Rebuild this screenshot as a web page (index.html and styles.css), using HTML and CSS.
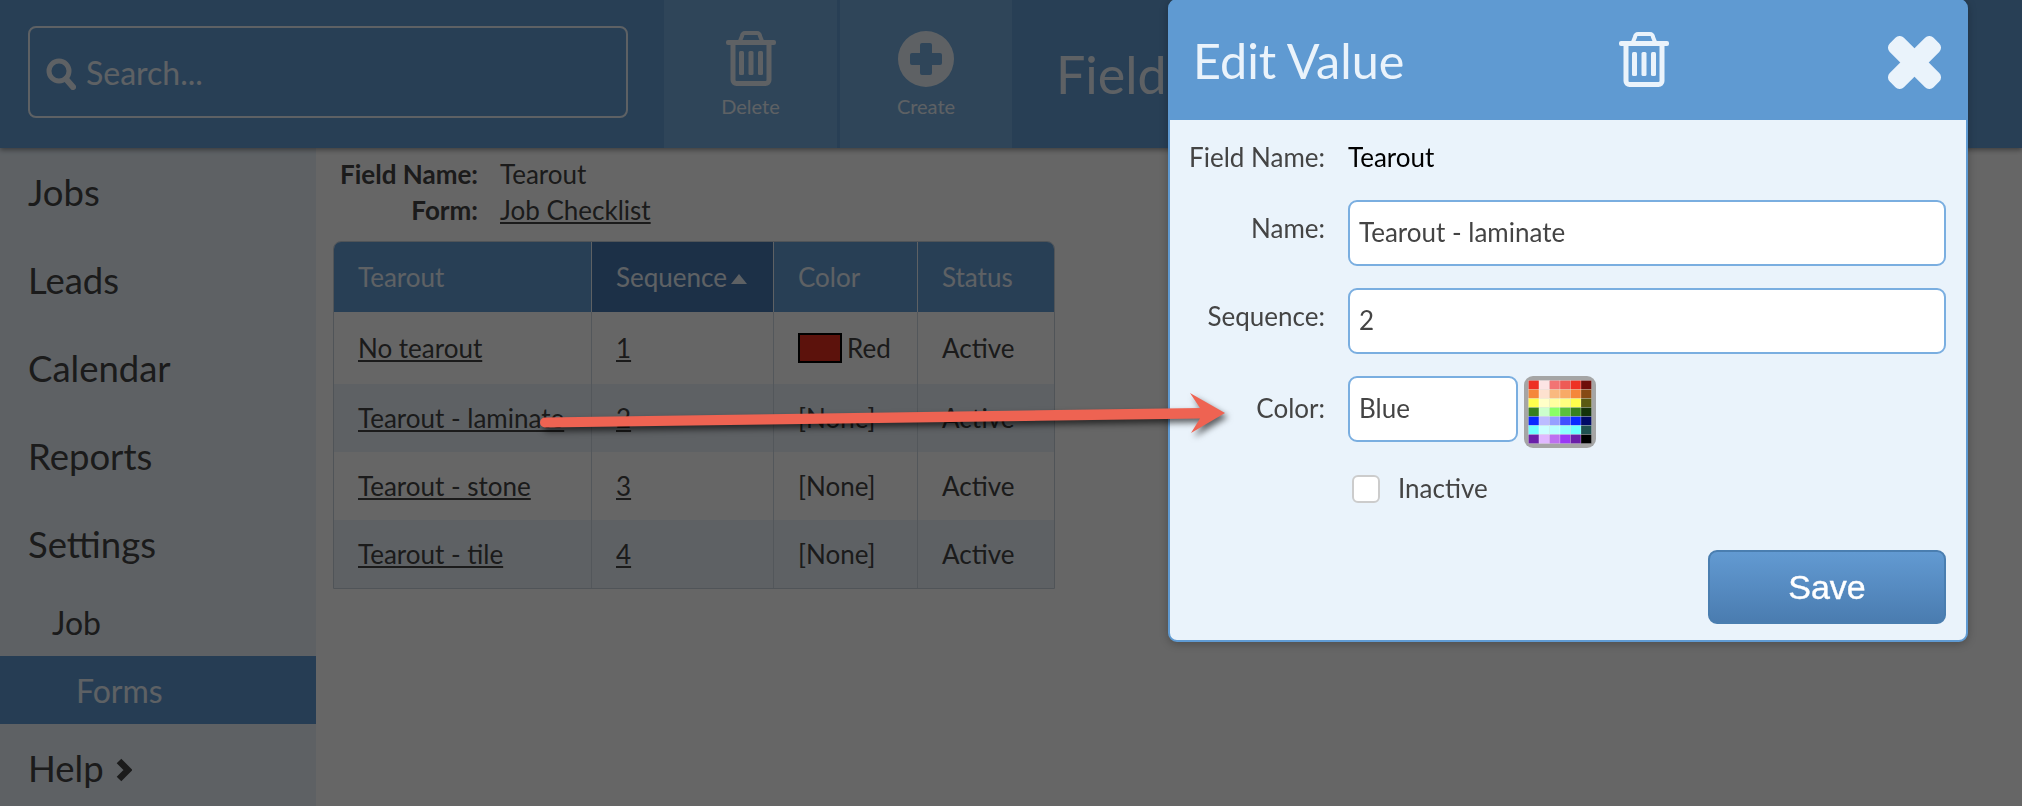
FILE: index.html
```html
<!DOCTYPE html>
<html lang="en">
<head>
<meta charset="utf-8">
<title>Edit Value</title>
<link rel="stylesheet" href="styles.css">
</head>
<body>
<header class="topbar">
  <label class="search">
    <svg class="search-icon" viewBox="0 0 30 32"><circle cx="13" cy="13" r="10" fill="none" stroke="currentColor" stroke-width="5"/><path d="M20 21l7 8" stroke="currentColor" stroke-width="6" stroke-linecap="round"/></svg>
    <input class="search-input" type="text" placeholder="Search...">
  </label>
  <div class="tool tool-delete">
    <svg class="trash" viewBox="0 0 50 55"><use href="#trash-shape"/></svg>
    <span>Delete</span>
  </div>
  <div class="tool tool-create">
    <svg class="plus" viewBox="0 0 56 56"><path fill="currentColor" fill-rule="evenodd" d="M28 0a28 28 0 1 1 0 56a28 28 0 0 1 0-56zM24 12a2 2 0 0 0-2 2v8h-8a2 2 0 0 0-2 2v8a2 2 0 0 0 2 2h8v8a2 2 0 0 0 2 2h8a2 2 0 0 0 2-2v-8h8a2 2 0 0 0 2-2v-8a2 2 0 0 0-2-2h-8v-8a2 2 0 0 0-2-2z"/></svg>
    <span>Create</span>
  </div>
  <h1 class="page-title">Field</h1>
</header>

<div class="layout">
  <nav class="sidebar">
    <a class="nav-item">Jobs</a>
    <a class="nav-item">Leads</a>
    <a class="nav-item">Calendar</a>
    <a class="nav-item">Reports</a>
    <a class="nav-item">Settings</a>
    <a class="nav-sub">Job</a>
    <a class="nav-sub nav-sub-active">Forms</a>
    <a class="nav-item">Help
      <svg class="chevron" viewBox="0 0 16 24"><path d="M3 3l9 9l-9 9" fill="none" stroke="currentColor" stroke-width="6.500"/></svg>
    </a>
  </nav>
  <main class="content">
    <dl class="meta">
      <dt>Field Name:</dt><dd>Tearout</dd>
      <dt>Form:</dt><dd><a class="link">Job Checklist</a></dd>
    </dl>
    <table class="values">
      <thead>
        <tr>
          <th class="col-name">Tearout</th>
          <th class="col-seq sorted">Sequence<span class="sort-up"></span></th>
          <th class="col-color">Color</th>
          <th class="col-status">Status</th>
        </tr>
      </thead>
      <tbody>
        <tr class="row-tall">
          <td><a class="link">No tearout</a></td><td><a class="link">1</a></td>
          <td><span class="color-cell"><span class="chip"></span>Red</span></td><td>Active</td>
        </tr>
        <tr class="striped">
          <td><a class="link">Tearout - laminate</a></td><td><a class="link">2</a></td><td>[None]</td><td>Active</td>
        </tr>
        <tr>
          <td><a class="link">Tearout - stone</a></td><td><a class="link">3</a></td><td>[None]</td><td>Active</td>
        </tr>
        <tr class="striped">
          <td><a class="link">Tearout - tile</a></td><td><a class="link">4</a></td><td>[None]</td><td>Active</td>
        </tr>
      </tbody>
    </table>
  </main>
</div>

<div class="overlay"></div>

<section class="modal">
  <div class="modal-head">
    <h2 class="modal-title">Edit Value</h2>
    <svg class="trash modal-trash" viewBox="0 0 50 55">
      <defs>
        <g id="trash-shape">
          <rect x="0" y="9" width="50" height="5" rx="2" fill="currentColor"/>
          <path d="M14 10l2-5a3 3 0 0 1 3-3h12a3 3 0 0 1 3 3l2 5" fill="none" stroke="currentColor" stroke-width="4"/>
          <path d="M7 12v37a3.500 3.500 0 0 0 3.500 3.500h29a3.500 3.500 0 0 0 3.500-3.500v-37" fill="none" stroke="currentColor" stroke-width="5"/>
          <rect x="13" y="20" width="5" height="24" rx="1.500" fill="currentColor"/>
          <rect x="22.500" y="20" width="5" height="24" rx="1.500" fill="currentColor"/>
          <rect x="32" y="20" width="5" height="24" rx="1.500" fill="currentColor"/>
        </g>
      </defs>
      <use href="#trash-shape"/>
    </svg>
    <svg class="close" viewBox="0 0 53 53"><g fill="currentColor"><rect x="-4.500" y="16.500" width="62" height="20" rx="6" transform="rotate(45 26.500 26.500)"/><rect x="-4.500" y="16.500" width="62" height="20" rx="6" transform="rotate(-45 26.500 26.500)"/></g></svg>
  </div>
  <form class="modal-body">
    <div class="form-row form-row-static">
      <span class="form-label">Field Name:</span>
      <span class="form-value">Tearout</span>
    </div>
    <div class="form-row">
      <label class="form-label">Name:</label>
      <input class="field field-wide" type="text" value="Tearout - laminate">
    </div>
    <div class="form-row">
      <label class="form-label">Sequence:</label>
      <input class="field field-wide" type="text" value="2">
    </div>
    <div class="form-row form-row-color">
      <label class="form-label">Color:</label>
      <input class="field field-color" type="text" value="Blue">
      <svg class="palette" viewBox="0 0 72 72">
        <rect width="72" height="72" rx="9" fill="#a5a5a5"/>
        <g transform="translate(4.500 4.500)" stroke="#ffffff" stroke-opacity=".3" stroke-width=".7">
          <rect width="10.500" height="9" fill="#ee3124"/><rect x="10.500" width="10.500" height="9" fill="#fce4e4"/><rect x="21" width="10.500" height="9" fill="#f27474"/><rect x="31.500" width="10.500" height="9" fill="#ee5a55"/><rect x="42" width="10.500" height="9" fill="#ee3124"/><rect x="52.500" width="10.500" height="9" fill="#6e0f0a"/>
          <rect y="9" width="10.500" height="9" fill="#f5873a"/><rect x="10.500" y="9" width="10.500" height="9" fill="#fde1cf"/><rect x="21" y="9" width="10.500" height="9" fill="#f9b97f"/><rect x="31.500" y="9" width="10.500" height="9" fill="#f8aa66"/><rect x="42" y="9" width="10.500" height="9" fill="#f5873a"/><rect x="52.500" y="9" width="10.500" height="9" fill="#864a14"/>
          <rect y="18" width="10.500" height="9" fill="#ffff4d"/><rect x="10.500" y="18" width="10.500" height="9" fill="#ffffc8"/><rect x="21" y="18" width="10.500" height="9" fill="#ffffa0"/><rect x="31.500" y="18" width="10.500" height="9" fill="#ffff80"/><rect x="42" y="18" width="10.500" height="9" fill="#ffff4d"/><rect x="52.500" y="18" width="10.500" height="9" fill="#5a5a12"/>
          <rect y="27" width="10.500" height="9" fill="#37801e"/><rect x="10.500" y="27" width="10.500" height="9" fill="#ccffcc"/><rect x="21" y="27" width="10.500" height="9" fill="#8aff66"/><rect x="31.500" y="27" width="10.500" height="9" fill="#5abf3c"/><rect x="42" y="27" width="10.500" height="9" fill="#37801e"/><rect x="52.500" y="27" width="10.500" height="9" fill="#14330a"/>
          <rect y="36" width="10.500" height="9" fill="#0a28ff"/><rect x="10.500" y="36" width="10.500" height="9" fill="#bcbcff"/><rect x="21" y="36" width="10.500" height="9" fill="#96a0ff"/><rect x="31.500" y="36" width="10.500" height="9" fill="#4050ff"/><rect x="42" y="36" width="10.500" height="9" fill="#0a28ff"/><rect x="52.500" y="36" width="10.500" height="9" fill="#000a66"/>
          <rect y="45" width="10.500" height="9" fill="#6effff"/><rect x="10.500" y="45" width="10.500" height="9" fill="#ccffff"/><rect x="21" y="45" width="10.500" height="9" fill="#b8ffff"/><rect x="31.500" y="45" width="10.500" height="9" fill="#8effff"/><rect x="42" y="45" width="10.500" height="9" fill="#6effff"/><rect x="52.500" y="45" width="10.500" height="9" fill="#1f5050"/>
          <rect y="54" width="10.500" height="9" fill="#6a1fa8"/><rect x="10.500" y="54" width="10.500" height="9" fill="#e0b8ff"/><rect x="21" y="54" width="10.500" height="9" fill="#bd70f0"/><rect x="31.500" y="54" width="10.500" height="9" fill="#9a38f5"/><rect x="42" y="54" width="10.500" height="9" fill="#6a1fa8"/><rect x="52.500" y="54" width="10.500" height="9" fill="#000000"/>
        </g>
      </svg>
    </div>
    <label class="check-row">
      <input class="check" type="checkbox">
      <span class="check-text">Inactive</span>
    </label>
    <div class="actions">
      <button class="save" type="button">Save</button>
    </div>
  </form>
</section>

<svg class="arrow" viewBox="0 0 710 60">
  <path d="M15 32.500L670 23L660 8L695 28L661 48L670 33.500L15 42.500a5 5 0 0 1 0-10z" fill="#ee6352"/>
</svg>
</body>
</html>
```
FILE: styles.css
```css
* { box-sizing: border-box; }
html, body { height: 100%; }
body {
  margin: 0;
  overflow: hidden;
  background: #fff;
  color: #444;
  font-family: Lato, "Noto Sans", sans-serif;
  font-size: 26px;
}
svg { display: block; }

.topbar {
  display: flex;
  align-items: stretch;
  height: 148px;
  padding-left: 28px;
  background: #649dd5;
  color: #eaf3fb;
  box-shadow: 0 2px 5px rgba(0, 0, 0, .4);
  position: relative;
}
.search {
  display: flex;
  align-items: center;
  gap: 10px;
  width: 600px;
  height: 92px;
  margin: 26px 36px 0 0;
  padding-left: 16px;
  border: 2px solid #eaf3fb;
  border-radius: 8px;
}
.search-icon { width: 30px; height: 32px; margin-top: 4px; flex: none; }
.search-input {
  flex: 1;
  min-width: 0;
  border: 0;
  outline: 0;
  background: transparent;
  padding: 0;
  font: 32px Lato, sans-serif;
  color: #eaf3fb;
}
.search-input::placeholder { color: #eaf3fb; opacity: 1; }
.tool {
  display: flex;
  flex-direction: column;
  align-items: center;
  padding-top: 31px;
  background: #75acde;
  border-right: 3px solid #649dd5;
  font-size: 20px;
  line-height: 24px;
}
.tool-delete { width: 176px; }
.tool-create { width: 172px; border-right: 0; }
.tool .trash { width: 50px; height: 55px; }
.tool .plus { width: 56px; height: 56px; margin-bottom: -1px; }
.tool span { margin-top: 8px; }
.page-title {
  margin: 0 0 0 44px;
  font-size: 52px;
  font-weight: 400;
  line-height: 148px;
  white-space: nowrap;
}

.layout { display: flex; height: 658px; }
.sidebar { width: 316px; flex: none; background: #eaf3fb; }
.nav-item, .nav-sub { display: flex; align-items: center; }
.nav-item { height: 88px; padding-left: 28px; font-size: 36.500px; gap: 12px; }
.nav-sub { height: 68px; padding-left: 52px; font-size: 32px; }
.nav-sub-active { padding-left: 76px; background: #5f9ad2; color: #eaf3fb; }
.chevron { width: 16px; height: 24px; margin-top: 4px; }

.content { flex: 1; padding: 8px 0 0 17px; }
.meta {
  display: grid;
  grid-template-columns: 145px auto;
  justify-content: start;
  column-gap: 22px;
  margin: 0 0 13px;
  line-height: 36px;
}
.meta dt { text-align: right; font-weight: 700; }
.meta dd { margin: 0; }
.link { color: inherit; text-decoration: underline; }

.values {
  width: 722px;
  table-layout: fixed;
  border-collapse: separate;
  border-spacing: 0;
  border: 1px solid #c8d2dc;
  border-radius: 8px 8px 0 0;
  line-height: 32px;
}
.col-name { width: 258px; }
.col-seq { width: 182px; }
.col-color { width: 144px; }
.values th, .values td { padding: 0 0 0 24px; text-align: left; border-right: 1px solid #cfd9e3; }
.values th:last-child, .values td:last-child { border-right: 0; }
.values th {
  height: 70px;
  background: #649dd5;
  color: #eaf3fb;
  font-weight: 400;
  border-right-color: #eaf3fb;
}
.values th:first-child { border-top-left-radius: 7px; }
.values th:last-child { border-top-right-radius: 7px; }
.values th.sorted { background: #4678b2; }
.values td { height: 68px; }
.row-tall td { height: 72px; }
.striped td { background: #eaf3fb; }
.sort-up {
  display: inline-block;
  margin-left: 4px;
  vertical-align: 3px;
  border-left: 8px solid transparent;
  border-right: 8px solid transparent;
  border-bottom: 10px solid #eaf3fb;
}
.color-cell { display: flex; align-items: center; gap: 5px; }
.chip {
  width: 44px;
  height: 30px;
  background: #e62d1e;
  border: 2px solid #000;
  flex: none;
}

.overlay {
  position: fixed;
  inset: 0;
  background: rgba(0, 0, 0, .6);
}

.modal {
  position: absolute;
  left: 1168px;
  top: -1px;
  width: 800px;
  height: 643px;
  background: #eaf3fb;
  border: 2px solid #5f9ad2;
  border-radius: 9px;
  box-shadow: 0 2px 8px rgba(0, 0, 0, .25);
}
.modal-head {
  display: flex;
  align-items: center;
  height: 120px;
  margin: -1px -1px 0;
  padding: 0 26px 0 24px;
  background: #5f9ad2;
  color: #eaf3fb;
  border-radius: 8px 8px 0 0;
}
.modal-title {
  margin: 0;
  width: 426px;
  font-size: 48.500px;
  font-weight: 400;
  line-height: 120px;
  white-space: nowrap;
}
.modal-trash { width: 50px; height: 55px; margin-top: -1px; }
.close { width: 53px; height: 53px; margin: 4px 0 0 219px; }

.modal-body { padding: 0 20px 0 0; }
.form-row { display: flex; align-items: flex-start; gap: 23px; margin-bottom: 22px; }
.form-row-static { height: 80px; margin-bottom: 0; padding-top: 20px; line-height: 34px; }
.form-label {
  width: 155px;
  flex: none;
  text-align: right;
  line-height: 34px;
  padding-top: 11px;
}
.form-row-static .form-label { padding-top: 0; }
.form-value { color: #000; }
.field {
  height: 66px;
  padding: 0 9px 2px;
  background: #fff;
  border: 2px solid #7aaee0;
  border-radius: 9px;
  font: 26px Lato, sans-serif;
  color: #444;
  outline: 0;
}
.field-wide { flex: 1; min-width: 0; }
.field-color { width: 170px; }
.form-row-color { gap: 0; margin-bottom: 0; height: 99px; }
.form-row-color .form-label { margin-right: 23px; padding-top: 15px; }
.palette { width: 72px; height: 72px; margin-left: 6px; flex: none; }
.check-row {
  display: flex;
  align-items: center;
  gap: 18px;
  height: 28px;
  margin-left: 182px;
}
.check-text { margin-top: -2px; }
.check {
  appearance: none;
  width: 28px;
  height: 28px;
  margin: 0;
  background: #fff;
  border: 2px solid #ccc;
  border-radius: 6px;
}
.actions { display: flex; justify-content: flex-end; margin-top: 47px; }
.save {
  width: 238px;
  height: 74px;
  background: linear-gradient(#629ad2, #4a7cb0);
  border: 2px solid #4a7eb0;
  border-radius: 9px;
  color: #fff;
  font: 34px "Liberation Sans", Arial, sans-serif;
  -webkit-text-stroke: .4px #fff;
}

.arrow {
  position: absolute;
  left: 530px;
  top: 385px;
  width: 710px;
  height: 60px;
  filter: drop-shadow(3px 4px 3px rgba(0, 0, 0, .6));
}
```
